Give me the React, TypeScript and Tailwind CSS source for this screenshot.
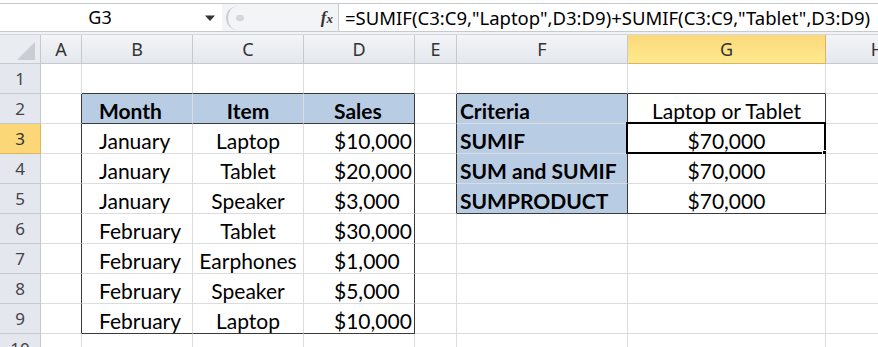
const cols = ["A", "B", "C", "D", "E", "F", "G", "H"];

type Cell = { text?: string; bold?: boolean; align?: "left" | "center" | "indent" | "sales"; blue?: boolean };

const data: Record<number, Record<string, Cell>> = {
  2: {
    B: { text: "Month", bold: true, align: "indent", blue: true },
    C: { text: "Item", bold: true, align: "center", blue: true },
    D: { text: "Sales", bold: true, align: "sales", blue: true },
    F: { text: "Criteria", bold: true, align: "left", blue: true },
    G: { text: "Laptop or Tablet", align: "center" },
  },
  3: {
    B: { text: "January", align: "indent" },
    C: { text: "Laptop", align: "center" },
    D: { text: "$10,000", align: "sales" },
    F: { text: "SUMIF", bold: true, align: "left", blue: true },
    G: { text: "$70,000", align: "center" },
  },
  4: {
    B: { text: "January", align: "indent" },
    C: { text: "Tablet", align: "center" },
    D: { text: "$20,000", align: "sales" },
    F: { text: "SUM and SUMIF", bold: true, align: "left", blue: true },
    G: { text: "$70,000", align: "center" },
  },
  5: {
    B: { text: "January", align: "indent" },
    C: { text: "Speaker", align: "center" },
    D: { text: "$3,000", align: "sales" },
    F: { text: "SUMPRODUCT", bold: true, align: "left", blue: true },
    G: { text: "$70,000", align: "center" },
  },
  6: {
    B: { text: "February", align: "indent" },
    C: { text: "Tablet", align: "center" },
    D: { text: "$30,000", align: "sales" },
  },
  7: {
    B: { text: "February", align: "indent" },
    C: { text: "Earphones", align: "center" },
    D: { text: "$1,000", align: "sales" },
  },
  8: {
    B: { text: "February", align: "indent" },
    C: { text: "Speaker", align: "center" },
    D: { text: "$5,000", align: "sales" },
  },
  9: {
    B: { text: "February", align: "indent" },
    C: { text: "Laptop", align: "center" },
    D: { text: "$10,000", align: "sales" },
  },
};

function rightDark(r: number, c: string) {
  if (r >= 2 && r <= 9 && (c === "A" || c === "D")) return true;
  if (r >= 2 && r <= 5 && (c === "E" || c === "F" || c === "G")) return true;
  return false;
}

function bottomDark(r: number, c: string) {
  if ((c === "B" || c === "C" || c === "D") && (r === 1 || r === 2 || r === 9)) return true;
  if ((c === "F" || c === "G") && (r === 1 || r === 5)) return true;
  return false;
}

function GridCell({ r, c }: { r: number; c: string }) {
  const cell = data[r]?.[c];
  const br = rightDark(r, c) ? "border-r-[#3a3a3a]" : "border-r-[#dadcdd]";
  const bb = bottomDark(r, c) ? "border-b-[#3a3a3a]" : "border-b-[#dadcdd]";
  const bg = cell?.blue ? "bg-[#b8cce4]" : "bg-white";
  let align = "justify-center";
  if (cell?.align === "left") align = "justify-start pl-[3px]";
  if (cell?.align === "indent") align = "justify-start pl-[17px]";
  if (cell?.align === "sales") align = "justify-start pl-[30px]";
  return (
    <div className={`relative flex items-center border-r border-b ${br} ${bb} ${bg} ${align} h-[30px] pt-[3px]`}>
      {cell?.text && (
        <span className={`whitespace-nowrap text-[21px] leading-none text-black ${cell.bold ? "font-bold" : ""}`}>
          {cell.text}
        </span>
      )}
      {r === 3 && c === "G" && (
        <div className="absolute -left-[2px] -top-[2px] -right-[1px] -bottom-[1px] border-2 border-black">
          <div className="absolute -right-[4px] -bottom-[4px] h-[6px] w-[6px] border border-white bg-black" />
        </div>
      )}
    </div>
  );
}

export default function App() {
  const rows = [1, 2, 3, 4, 5, 6, 7, 8, 9, 10];
  return (
    <div className="h-[347px] w-[878px] overflow-hidden bg-white font-['Lato',sans-serif]">
      {/* formula bar */}
      <div className="h-[4px] border-b border-[#c5cad1] bg-white" />
      <div className="flex h-[28px] items-center border-b border-[#c5cad1] bg-white font-['Noto_Sans',sans-serif]">
        <div className="flex w-[222px] items-center">
          <span className="w-[200px] text-center text-[18px] text-black">G3</span>
          <svg width="12" height="8" viewBox="0 0 12 8" className="ml-[4px]">
            <path d="M1 1.5h10L6 7z" fill="#333" />
          </svg>
        </div>
        <div className="flex h-full w-[116px] items-center bg-[#f3f4f6]">
          <div className="ml-[4px] flex h-[24px] w-[30px] items-center rounded-l-full border-l-2 border-[#c9cdd3] pl-[8px]">
            <div className="h-[6px] w-[8px] rounded-full bg-[#d3d6da]" />
          </div>
          <span className="ml-auto mr-[5px] font-['Liberation_Serif',serif] text-[17px] font-bold italic text-[#333]">
            f<span className="text-[13px]">x</span>
          </span>
        </div>
        <div className="h-full w-px bg-[#c5cad1]" />
        <span className="ml-[6px] whitespace-nowrap text-[18.5px] text-black">
          =SUMIF(C3:C9,"Laptop",D3:D9)+SUMIF(C3:C9,"Tablet",D3:D9)
        </span>
      </div>
      <div className="h-[3px] border-b border-[#d4d7dc] bg-[#f0f2f5]" />

      {/* sheet grid */}
      <div className="grid grid-cols-[41px_41px_111px_111px_111px_42px_171px_198px_104px]">
        {/* column headers */}
        <div className="relative h-[29px] border-r border-b border-[#c5cad1] bg-[#e9ecf0]">
          <svg width="18" height="18" viewBox="0 0 18 18" className="absolute right-[5px] bottom-[3px]">
            <path d="M18 0V18H0z" fill="#c9ced5" />
          </svg>
        </div>
        {cols.map((c) =>
          c === "G" ? (
            <div
              key={c}
              className="flex h-[29px] items-center justify-center border-r border-b border-[#e2b35a] bg-gradient-to-b from-[#fcd97a] to-[#fde98f] font-['Noto_Sans',sans-serif] text-[18px] text-[#333]"
            >
              {c}
            </div>
          ) : (
            <div
              key={c}
              className="flex h-[29px] items-center justify-center border-r border-b border-[#c5cad1] bg-gradient-to-b from-[#f2f4f7] to-[#e4e8ed] font-['Noto_Sans',sans-serif] text-[18px] text-[#333]"
            >
              {c}
            </div>
          )
        )}
        {rows.map((r) => (
          <div key={r} className="contents">
            {r === 3 ? (
              <div className="flex h-[30px] items-center justify-center border-r border-b border-[#e2b35a] bg-[#fbd778] font-['Noto_Sans',sans-serif] text-[17px] text-[#333]">
                {r}
              </div>
            ) : (
              <div className="flex h-[30px] items-center justify-center border-r border-b border-[#c5cad1] bg-[#e4e8ee] font-['Noto_Sans',sans-serif] text-[17px] text-[#444]">
                {r}
              </div>
            )}
            {cols.map((c) => (
              <GridCell key={c} r={r} c={c} />
            ))}
          </div>
        ))}
      </div>
    </div>
  );
}
